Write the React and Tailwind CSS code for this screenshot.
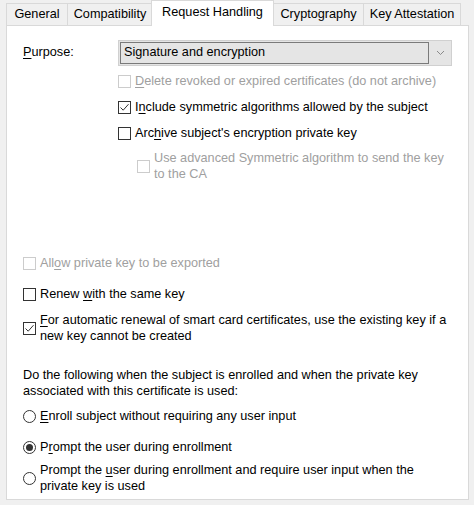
import React from 'react';

const font = { fontFamily: '"Liberation Sans", Arial, sans-serif' };

const U = ({ children }) => <span className="underline underline-offset-[2px] decoration-1">{children}</span>;

const Check = ({ checked, disabled }) => (
  <span
    className={`w-[13px] h-[13px] shrink-0 border bg-white flex items-center justify-center ${
      disabled ? 'border-[#cccccc]' : 'border-[#333333]'
    }`}
  >
    {checked && (
      <svg width="11" height="11" viewBox="0 0 11 11">
        <path d="M1.5 5.5 L4.2 8.2 L9.5 2.2" fill="none" stroke="#333333" strokeWidth="1" />
      </svg>
    )}
  </span>
);

const Radio = ({ checked }) => (
  <span className="w-[13px] h-[13px] shrink-0 rounded-full border border-[#333333] bg-white flex items-center justify-center">
    {checked && <span className="w-[7px] h-[7px] rounded-full bg-[#333333]" />}
  </span>
);

const Row = ({ control, children, disabled, className = '' }) => (
  <div className={`flex items-center gap-[4px] ${className}`}>
    {control}
    <div className={`leading-[16px] ${disabled ? 'text-[#a0a0a0]' : 'text-black'}`}>{children}</div>
  </div>
);

const tabs = [
  { label: 'General', w: 'w-[62px]' },
  { label: 'Compatibility', w: 'w-[86px]' },
  { label: 'Request Handling', w: 'w-[123px]', active: true },
  { label: 'Cryptography', w: 'w-[91px]' },
  { label: 'Key Attestation', w: 'w-[98px]' },
];

const App = () => {
  return (
    <div className="w-[474px] h-[505px] bg-[#f0f0f0] text-[12.7px] overflow-hidden" style={font}>
      <div className="flex items-end h-[26px] pl-[6px] relative z-10">
        {tabs.map((t) =>
          t.active ? (
            <div
              key={t.label}
              className={`${t.w} h-[26px] bg-white border border-b-0 border-[#d9d9d9] -mx-px flex items-center justify-center pb-[2px]`}
            >
              {t.label}
            </div>
          ) : (
            <div
              key={t.label}
              className={`${t.w} h-[22px] mb-px bg-[#f0f0f0] border border-b-0 border-[#d9d9d9] -mr-px flex items-center justify-center`}
            >
              {t.label}
            </div>
          )
        )}
      </div>
      <div className="ml-[6px] w-[463px] h-[475px] -mt-px bg-white border border-[#d9d9d9] pl-[16px] pt-[14px]">
        <div className="flex items-center h-[26px]">
          <div className="w-[95px]">
            <U>P</U>urpose:
          </div>
          <div className="w-[334px] h-[26px] bg-[#e5e5e5] border border-[#d0d0d0] flex items-center pl-px">
            <div className="w-[309px] h-[22px] border border-[#7a7a7a] flex items-center pl-[3px]">
              Signature and encryption
            </div>
            <div className="flex-1 flex items-center justify-center">
              <svg width="9" height="6" viewBox="0 0 9 6">
                <path d="M1 1 L4.5 4.5 L8 1" fill="none" stroke="#8a8a8a" strokeWidth="1" />
              </svg>
            </div>
          </div>
        </div>

        <div className="pl-[95px]">
          <Row className="mt-[7px]" control={<Check disabled />} disabled>
            <U>D</U>elete revoked or expired certificates (do not archive)
          </Row>
          <Row className="mt-[10px]" control={<Check checked />}>
            I<U>n</U>clude symmetric algorithms allowed by the subject
          </Row>
          <Row className="mt-[10px]" control={<Check />}>
            Arc<U>h</U>ive subject's encryption private key
          </Row>
          <Row className="mt-[9px] pl-[19px]" control={<Check disabled />} disabled>
            Use advanced Symmetric algorithm to send the key
            <br />
            to the CA
          </Row>
        </div>

        <Row className="mt-[73px]" control={<Check disabled />} disabled>
          All<U>o</U>w private key to be exported
        </Row>
        <Row className="mt-[15px]" control={<Check />}>
          Renew <U>w</U>ith the same key
        </Row>
        <Row className="mt-[10px]" control={<Check checked />}>
          <U>F</U>or automatic renewal of smart card certificates, use the existing key if a
          <br />
          new key cannot be created
        </Row>

        <div className="mt-[23px] leading-[16px]">
          Do the following when the subject is enrolled and when the private key
          <br />
          associated with this certificate is used:
        </div>
        <Row className="mt-[9px]" control={<Radio />}>
          <U>E</U>nroll subject without requiring any user input
        </Row>
        <Row className="mt-[15px]" control={<Radio checked />}>
          P<U>r</U>ompt the user during enrollment
        </Row>
        <Row className="mt-[7px]" control={<Radio />}>
          Prompt the <U>u</U>ser during enrollment and require user input when the
          <br />
          private key is used
        </Row>
      </div>
    </div>
  );
};

export default App;
